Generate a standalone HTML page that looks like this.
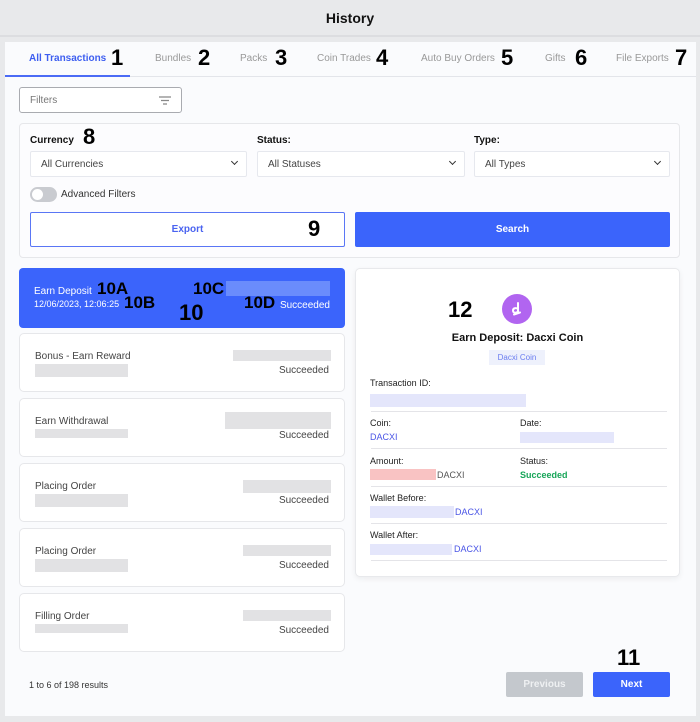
<!DOCTYPE html>
<html><head><style>
*{margin:0;padding:0;box-sizing:border-box}
body{width:700px;height:722px;background:#e8e9eb;font-family:"Liberation Sans",sans-serif;position:relative;overflow:hidden;color:#222}
.a{position:absolute}
.main{left:5px;top:42px;width:691px;height:674px;background:#fafbfd}
.hdr{left:0;top:0;width:700px;height:37px;background:#e8e9eb;border-bottom:2px solid #dcdde0;text-align:center;font-size:14px;font-weight:bold;line-height:36px;color:#111}
.tab{font-size:10px;color:#999;top:53px}
.num{font-weight:bold;font-size:22px;color:#000;font-family:"Liberation Sans",sans-serif}
.sel{height:26px;background:#fff;border:1px solid #e6e8ee;border-radius:2px;font-size:10px;color:#444;padding:7px 10px}
.chev{position:absolute;right:9px;top:7px;width:5px;height:5px;border-right:1.3px solid #333;border-bottom:1.3px solid #333;transform:rotate(45deg)}
.lbl{font-size:10px;font-weight:bold;color:#111}
.card{left:19px;width:326px;height:59px;background:#fff;border:1px solid #e6e7ea;border-radius:5px}
.card .t{position:absolute;left:15px;top:17px;font-size:10px;color:#444}
.card .s{position:absolute;right:15px;top:31px;font-size:10px;color:#444}
.blur{position:absolute;background:#e2e2e4}
.bl{background:#e4e6fb}
.dl{position:absolute;left:15px;width:296px;border-top:1px solid #e4e4e8}
.dk{font-size:9px;color:#222}
.dv{font-size:9px;color:#4a55e6}
</style></head><body>
<div class="a hdr">History</div>
<div class="a main"></div>
<div class="a" style="left:5px;top:76px;width:691px;height:1px;background:#e3e5ea"></div>
<div class="a" style="left:5px;top:75px;width:125px;height:2px;background:#4b6bf5"></div>
<div class="a tab" style="left:29px;color:#3d5ef0;font-weight:bold">All Transactions</div>
<div class="a num" style="left:111px;top:45px">1</div>
<div class="a tab" style="left:155px">Bundles</div><div class="a num" style="left:198px;top:45px">2</div>
<div class="a tab" style="left:240px">Packs</div><div class="a num" style="left:275px;top:45px">3</div>
<div class="a tab" style="left:317px">Coin Trades</div><div class="a num" style="left:376px;top:45px">4</div>
<div class="a tab" style="left:421px">Auto Buy Orders</div><div class="a num" style="left:501px;top:45px">5</div>
<div class="a tab" style="left:545px">Gifts</div><div class="a num" style="left:575px;top:45px">6</div>
<div class="a tab" style="left:616px">File Exports</div><div class="a num" style="left:675px;top:45px">7</div>

<div class="a" style="left:19px;top:87px;width:163px;height:26px;border:1px solid #a9abb0;border-radius:3px;background:#fff;font-size:10px;color:#777;padding:7px 10px">Filters
<svg class="a" style="left:139px;top:8px" width="12" height="9"><path d="M0 1h12M2 4.5h8M4 8h4" stroke="#888" stroke-width="1.2"/></svg></div>

<div class="a" style="left:19px;top:123px;width:661px;height:135px;background:#fcfcfe;border:1px solid #e6e7ea;border-radius:4px"></div>
<div class="a lbl" style="left:30px;top:135px">Currency</div><div class="a num" style="left:83px;top:124px">8</div>
<div class="a lbl" style="left:257px;top:135px">Status:</div>
<div class="a lbl" style="left:474px;top:135px">Type:</div>
<div class="a sel" style="left:30px;top:151px;width:217px">All Currencies<span class="chev"></span></div>
<div class="a sel" style="left:257px;top:151px;width:208px">All Statuses<span class="chev"></span></div>
<div class="a sel" style="left:474px;top:151px;width:196px">All Types<span class="chev"></span></div>
<div class="a" style="left:30px;top:187px;width:27px;height:15px;border-radius:8px;background:#c9cbd0"><div class="a" style="left:2px;top:2px;width:11px;height:11px;border-radius:50%;background:#fff"></div></div>
<div class="a" style="left:61px;top:189px;font-size:10px;color:#333">Advanced Filters</div>
<div class="a" style="left:30px;top:212px;width:315px;height:35px;border:1px solid #5a76f5;border-radius:2px;background:#fff;text-align:center;line-height:33px;font-size:10px;color:#4a63f0;font-weight:bold">Export</div>
<div class="a num" style="left:308px;top:216px">9</div>
<div class="a" style="left:355px;top:212px;width:315px;height:35px;border-radius:2px;background:#3b64fb;text-align:center;line-height:35px;font-size:10px;color:#fff;font-weight:bold">Search</div>

<div class="a" style="left:19px;top:268px;width:326px;height:60px;background:#3b64fb;border-radius:4px;color:#fff">
<div class="a" style="left:15px;top:18px;font-size:10px">Earn Deposit</div>
<div class="a" style="left:15px;top:31px;font-size:9px">12/06/2023, 12:06:25</div>
<div class="a" style="left:207px;top:13px;width:104px;height:15px;background:#6a8cfc"></div>
<div class="a" style="right:15px;top:32px;font-size:10px">Succeeded</div>
<div class="a num" style="left:78px;top:11px;font-size:17px">10A</div>
<div class="a num" style="left:105px;top:25px;font-size:17px">10B</div>
<div class="a num" style="left:174px;top:11px;font-size:17px">10C</div>
<div class="a num" style="left:225px;top:25px;font-size:17px">10D</div>
<div class="a num" style="left:160px;top:32px">10</div>
</div>

<div class="a card" style="top:333px"><div class="t">Bonus - Earn Reward</div><div class="blur" style="left:15px;top:30px;width:93px;height:13px"></div><div class="blur" style="left:213px;top:16px;width:98px;height:11px"></div><div class="s">Succeeded</div></div>
<div class="a card" style="top:398px"><div class="t">Earn Withdrawal</div><div class="blur" style="left:15px;top:30px;width:93px;height:9px"></div><div class="blur" style="left:205px;top:13px;width:106px;height:17px"></div><div class="s">Succeeded</div></div>
<div class="a card" style="top:463px"><div class="t">Placing Order</div><div class="blur" style="left:15px;top:30px;width:93px;height:13px"></div><div class="blur" style="left:223px;top:16px;width:88px;height:13px"></div><div class="s">Succeeded</div></div>
<div class="a card" style="top:528px"><div class="t">Placing Order</div><div class="blur" style="left:15px;top:30px;width:93px;height:13px"></div><div class="blur" style="left:223px;top:16px;width:88px;height:11px"></div><div class="s">Succeeded</div></div>
<div class="a card" style="top:593px"><div class="t">Filling Order</div><div class="blur" style="left:15px;top:30px;width:93px;height:9px"></div><div class="blur" style="left:223px;top:16px;width:88px;height:11px"></div><div class="s">Succeeded</div></div>

<div class="a" style="left:355px;top:268px;width:325px;height:309px;background:#fff;border:1px solid #e8e9ec;border-radius:5px;box-shadow:0 2px 6px rgba(0,0,0,.06)">
<div class="a" style="left:146px;top:25px;width:30px;height:30px;border-radius:50%;background:#b165f0"></div>
<svg class="a" style="left:153px;top:32px" width="16" height="16"><path d="M9 2v8.5M9 10.5c-2 2-5 1.5-5-1s3-3 5-1.5M5 13.5l6-2" stroke="#fff" stroke-width="2" fill="none" stroke-linecap="round"/></svg>
<div class="a num" style="left:92px;top:28px">12</div>
<div class="a" style="left:0;width:323px;top:63px;text-align:center;font-size:11px;font-weight:bold;color:#111">Earn Deposit: Dacxi Coin</div>
<div class="a" style="left:133px;top:81px;width:56px;height:15px;background:#eef1fc;text-align:center;font-size:8px;line-height:15px;color:#6a7cf0">Dacxi Coin</div>
<div class="a dk" style="left:14px;top:109px">Transaction ID:</div>
<div class="a bl" style="left:14px;top:125px;width:156px;height:13px"></div>
<div class="dl" style="top:142px"></div>
<div class="a dk" style="left:14px;top:149px">Coin:</div><div class="a dv" style="left:14px;top:163px">DACXI</div>
<div class="a dk" style="left:164px;top:149px">Date:</div><div class="a bl" style="left:164px;top:163px;width:94px;height:11px"></div>
<div class="dl" style="top:179px"></div>
<div class="a dk" style="left:14px;top:187px">Amount:</div>
<div class="a" style="left:14px;top:200px;width:66px;height:11px;background:#f9c3c3"></div><div class="a" style="left:81px;top:201px;font-size:9px;color:#555">DACXI</div>
<div class="a dk" style="left:164px;top:187px">Status:</div><div class="a" style="left:164px;top:201px;font-size:9px;color:#17a558;font-weight:bold">Succeeded</div>
<div class="dl" style="top:217px"></div>
<div class="a dk" style="left:14px;top:224px">Wallet Before:</div>
<div class="a bl" style="left:14px;top:237px;width:84px;height:12px"></div><div class="a dv" style="left:99px;top:238px">DACXI</div>
<div class="dl" style="top:254px"></div>
<div class="a dk" style="left:14px;top:261px">Wallet After:</div>
<div class="a bl" style="left:14px;top:275px;width:82px;height:11px"></div><div class="a dv" style="left:98px;top:275px">DACXI</div>
<div class="dl" style="top:291px"></div>
</div>

<div class="a" style="left:29px;top:680px;font-size:9px;color:#333">1 to 6 of 198 results</div>
<div class="a" style="left:506px;top:672px;width:77px;height:25px;background:#c4c8cd;border-radius:2px;text-align:center;line-height:25px;font-size:10px;color:#eef0f2;font-weight:bold">Previous</div>
<div class="a" style="left:593px;top:672px;width:77px;height:25px;background:#3b64fb;border-radius:2px;text-align:center;line-height:25px;font-size:10px;color:#fff;font-weight:bold">Next</div>
<div class="a num" style="left:617px;top:645px">11</div>
</body></html>
